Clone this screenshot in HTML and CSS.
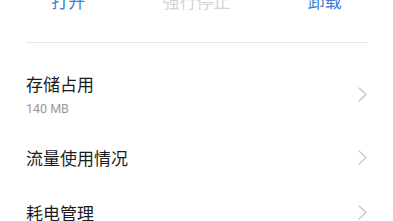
FILE: index.html
```html
<!DOCTYPE html>
<html lang="zh-CN">
<head>
<meta charset="utf-8">
<title>应用信息</title>
<link rel="stylesheet" href="styles.css">
</head>
<body>
<div class="page">
  <div class="actions">
    <div class="action action-primary">打开</div>
    <div class="action action-disabled">强行停止</div>
    <div class="action action-primary">卸载</div>
  </div>
  <div class="divider"></div>
  <div class="list">
    <div class="row row-tall">
      <div class="row-text">
        <div class="row-title">存储占用</div>
        <div class="row-sub">140 MB</div>
      </div>
      <svg class="chevron" viewBox="0 0 9 15" width="9" height="15"><polyline points="1,1 8,7.5 1,14" fill="none" stroke="#c6c6c6" stroke-width="1.3" stroke-linecap="round" stroke-linejoin="round"/></svg>
    </div>
    <div class="row">
      <div class="row-text">
        <div class="row-title">流量使用情况</div>
      </div>
      <svg class="chevron" viewBox="0 0 9 15" width="9" height="15"><polyline points="1,1 8,7.5 1,14" fill="none" stroke="#c6c6c6" stroke-width="1.3" stroke-linecap="round" stroke-linejoin="round"/></svg>
    </div>
    <div class="row">
      <div class="row-text">
        <div class="row-title">耗电管理</div>
      </div>
      <svg class="chevron" viewBox="0 0 9 15" width="9" height="15"><polyline points="1,1 8,7.5 1,14" fill="none" stroke="#c6c6c6" stroke-width="1.3" stroke-linecap="round" stroke-linejoin="round"/></svg>
    </div>
  </div>
</div>
</body>
</html>
```
FILE: styles.css
```css
html, body {
  margin: 0;
  padding: 0;
  background: #ffffff;
  overflow: hidden;
}
body {
  font-family: Roboto, "Noto Sans CJK SC", sans-serif;
  width: 393px;
  height: 221px;
}
.page {
  display: flex;
  flex-direction: column;
}
.actions {
  display: flex;
  margin-top: -11px;
  padding: 0 4px 29px;
}
.action {
  flex: 1;
  text-align: center;
  font-size: 17px;
  line-height: 24px;
  font-family: "Noto Sans CJK SC", sans-serif;
}
.action-primary {
  color: #3b7ddb;
}
.action-disabled {
  color: #d3d3d3;
}
.divider {
  height: 1px;
  background: #e6e6e6;
  margin: 0 26px;
}
.list {
  display: flex;
  flex-direction: column;
  margin-top: 15px;
}
.row {
  display: flex;
  align-items: center;
  justify-content: space-between;
  padding: 0 26px;
  height: 55px;
}
.row-tall {
  height: 72px;
}
.row-text {
  display: flex;
  flex-direction: column;
}
.row-title {
  font-family: "Noto Sans CJK SC", sans-serif;
  font-size: 17px;
  line-height: 24px;
  color: #1b1b1b;
}
.row-sub {
  margin-top: 5px;
  font-size: 12.5px;
  line-height: 16px;
  color: #999999;
}
.chevron {
  display: block;
  flex: none;
}
```
